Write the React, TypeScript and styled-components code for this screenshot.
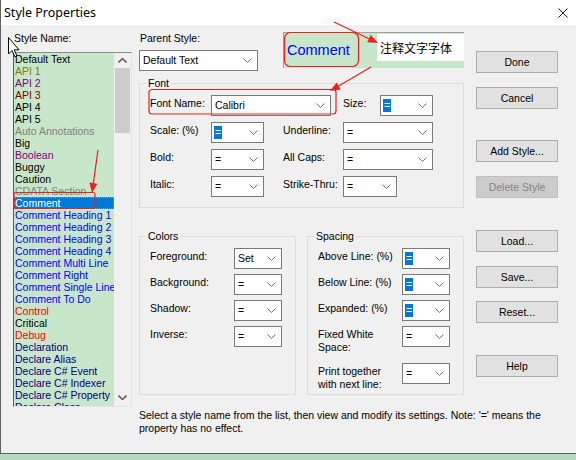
import styled, { createGlobalStyle } from "styled-components";

const GlobalStyle = createGlobalStyle`
  html, body {
    margin: 0;
    padding: 0;
  }
  body {
    width: 576px;
    height: 460px;
    overflow: hidden;
    background: #b7d8bd;
    font-family: "Liberation Sans", Arial, sans-serif;
    font-size: 10.5px;
    color: #000;
  }
  * {
    box-sizing: border-box;
  }
`;

const Window = styled.div`
  position: relative;
  width: 576px;
  height: 454px;
  background: #f0f0f0;
  border-left: 1px solid #5f5f5f;
  border-bottom: 1px solid #5f5f5f;
  display: flex;
  flex-direction: column;
`;

const TitleBar = styled.div`
  height: 25px;
  flex-shrink: 0;
  background: #fff;
  display: flex;
  align-items: center;
  justify-content: space-between;
  padding: 0 8px 0 3px;
`;

const Title = styled.span`
  font-family: "Noto Sans", "Open Sans", sans-serif;
  font-size: 12.5px;
  color: #000;
`;

const Body = styled.div`
  flex: 1;
  display: flex;
  padding-left: 12px;
`;

const LeftCol = styled.div`
  width: 119px;
  flex-shrink: 0;
  display: flex;
  flex-direction: column;
  padding-top: 7px;
`;

const Label = styled.div<{ $mb?: number }>`
  line-height: 13px;
  height: 13px;
  padding-left: 1px;
  margin-bottom: ${(p) => p.$mb ?? 0}px;
  white-space: nowrap;
`;

const ListBox = styled.div`
  height: 355px;
  display: flex;
  border-top: 1px solid #8a8a8a;
  border-left: 1px solid #5a5a5a;
  border-right: 1px solid #e3e3e3;
  border-bottom: 1px solid #e3e3e3;
`;

const ListItems = styled.div`
  flex: 1;
  overflow: hidden;
  background: #c8e6c9;
`;

const Item = styled.div<{ $color: string; $selected?: boolean }>`
  height: 12px;
  line-height: 12px;
  padding-left: 1px;
  white-space: nowrap;
  color: ${(p) => (p.$selected ? "#fff" : p.$color)};
  background: ${(p) => (p.$selected ? "#0078d7" : "transparent")};
  outline: ${(p) => (p.$selected ? "1px dotted #c9902e" : "none")};
  outline-offset: -1px;
`;

const ScrollBar = styled.div`
  width: 17px;
  flex-shrink: 0;
  background: #f0f0f0;
  display: flex;
  flex-direction: column;
`;

const ScrollArrow = styled.div<{ $h: number }>`
  height: ${(p) => p.$h}px;
  display: flex;
  align-items: center;
  justify-content: center;
`;

const ScrollTrack = styled.div`
  flex: 1;
  padding: 0 1px;
`;

const Thumb = styled.div`
  height: 65px;
  background: #cdcdcd;
`;

const MainArea = styled.div`
  margin-left: 7px;
  display: flex;
  flex-direction: column;
`;

const TopSection = styled.div`
  display: flex;
`;

const MidCol = styled.div`
  width: 325px;
  display: flex;
  flex-direction: column;
  padding-top: 7px;
`;

const TopRow = styled.div`
  display: flex;
  height: 40px;
`;

const ParentBlock = styled.div`
  width: 119px;
  display: flex;
  flex-direction: column;
`;

const Preview = styled.div`
  margin-left: 25px;
  width: 181px;
  height: 36px;
  background: #c8e6c9;
  border-top: 1px solid #a0a0a0;
  border-left: 1px solid #a0a0a0;
  display: flex;
  justify-content: space-between;
  align-items: flex-start;
`;

const PreviewText = styled.span`
  font-family: "Liberation Sans", Arial, sans-serif;
  font-size: 14.5px;
  line-height: 17px;
  color: #0000ff;
  padding: 9px 0 0 3px;
`;

const CjkLabel = styled.span`
  margin-top: 1px;
  width: 87px;
  height: 27px;
  line-height: 27px;
  background: #fff;
  padding-left: 3px;
  font-family: "Noto Sans CJK SC", "Noto Sans", sans-serif;
  font-size: 12px;
  color: #000;
`;

const Group = styled.fieldset<{ $w?: number; $mt?: number; $mr?: number }>`
  margin: ${(p) => p.$mt ?? 0}px ${(p) => p.$mr ?? 0}px 0 0;
  width: ${(p) => (p.$w ? `${p.$w}px` : "auto")};
  min-width: 0;
  border: 1px solid #dcdcdc;
  padding: 5px 10px 10px 10px;
  display: flex;
  flex-direction: column;
  gap: ${(p) => (p.$w ? 5 : 6)}px;
`;

const Legend = styled.legend`
  padding: 0 2px;
  margin-left: -4px;
  line-height: 13px;
  font-size: 10.5px;
`;

const GroupsRow = styled.div`
  display: flex;
  margin-top: 22px;
`;

const FieldRow = styled.div<{ $h?: number }>`
  display: flex;
  align-items: flex-start;
  height: ${(p) => p.$h ?? 21}px;
`;

const FieldLabel = styled.div<{ $w: number; $ml?: number }>`
  width: ${(p) => p.$w}px;
  margin-left: ${(p) => p.$ml ?? 0}px;
  flex-shrink: 0;
  padding-top: 2px;
  line-height: 13px;
  white-space: nowrap;
`;

const ComboBox = styled.div<{ $w: number; $h?: number }>`
  width: ${(p) => p.$w}px;
  height: ${(p) => p.$h ?? 21}px;
  flex-shrink: 0;
  background: #fff;
  border: 1px solid #7a7a7a;
  display: flex;
  align-items: center;
  padding: 0 5px 0 2px;
`;

const ComboText = styled.span<{ $hl?: boolean }>`
  line-height: 13px;
  padding: 0 1px;
  background: ${(p) => (p.$hl ? "#0078d7" : "transparent")};
  color: ${(p) => (p.$hl ? "#fff" : "#000")};
  white-space: nowrap;
`;

const ChevronWrap = styled.span`
  margin-left: auto;
  display: flex;
`;

const ButtonCol = styled.div`
  width: 82px;
  margin-left: 12px;
  padding-top: 26px;
  display: flex;
  flex-direction: column;
`;

const Button = styled.div<{ $mt?: number; $disabled?: boolean }>`
  height: 22px;
  margin-top: ${(p) => p.$mt ?? 0}px;
  background: ${(p) => (p.$disabled ? "#cccccc" : "#e1e1e1")};
  border: 1px solid ${(p) => (p.$disabled ? "#bfbfbf" : "#adadad")};
  color: ${(p) => (p.$disabled ? "#838383" : "#000")};
  display: flex;
  align-items: center;
  justify-content: center;
`;

const Note = styled.div`
  width: 415px;
  margin-top: 14px;
  line-height: 13px;
`;

const Overlay = styled.svg`
  position: absolute;
  left: 0;
  top: 0;
  pointer-events: none;
  overflow: visible;
`;

const Chevron = ({ up, dark }: { up?: boolean; dark?: boolean }) => (
  <svg width="9" height="5" viewBox="0 0 9 5">
    <polyline
      points={up ? "0.5,4.5 4.5,0.5 8.5,4.5" : "0.5,0.5 4.5,4.5 8.5,0.5"}
      fill="none"
      stroke={dark ? "#606060" : "#707070"}
      strokeWidth={dark ? 1.6 : 1}
    />
  </svg>
);

const Combo = ({ w, text, hl }: { w: number; text: string; hl?: boolean }) => (
  <ComboBox $w={w}>
    <ComboText $hl={hl}>{text}</ComboText>
    <ChevronWrap>
      <Chevron />
    </ChevronWrap>
  </ComboBox>
);

const Arrow = ({ x1, y1, x2, y2 }: { x1: number; y1: number; x2: number; y2: number }) => {
  const dx = x2 - x1;
  const dy = y2 - y1;
  const len = Math.sqrt(dx * dx + dy * dy);
  const ux = dx / len;
  const uy = dy / len;
  const bx = x2 - ux * 10;
  const by = y2 - uy * 10;
  const pts = `${x2},${y2} ${bx - uy * 4},${by + ux * 4} ${bx + uy * 4},${by - ux * 4}`;
  return (
    <g>
      <line x1={x1} y1={y1} x2={bx} y2={by} stroke="#f01e1e" strokeWidth="1.2" />
      <polygon points={pts} fill="#f01e1e" />
    </g>
  );
};

const styles: { name: string; color: string }[] = [
  { name: "Default Text", color: "#000" },
  { name: "API 1", color: "#808000" },
  { name: "API 2", color: "#800080" },
  { name: "API 3", color: "#800000" },
  { name: "API 4", color: "#000" },
  { name: "API 5", color: "#000" },
  { name: "Auto Annotations", color: "#808080" },
  { name: "Big", color: "#000" },
  { name: "Boolean", color: "#800080" },
  { name: "Buggy", color: "#000" },
  { name: "Caution", color: "#000" },
  { name: "CDATA Section", color: "#808080" },
  { name: "Comment", color: "#0000ff" },
  { name: "Comment Heading 1", color: "#0000ff" },
  { name: "Comment Heading 2", color: "#0000ff" },
  { name: "Comment Heading 3", color: "#0000ff" },
  { name: "Comment Heading 4", color: "#0000ff" },
  { name: "Comment Multi Line", color: "#0000ff" },
  { name: "Comment Right", color: "#0000ff" },
  { name: "Comment Single Line", color: "#0000ff" },
  { name: "Comment To Do", color: "#0000ff" },
  { name: "Control", color: "#ff0000" },
  { name: "Critical", color: "#000" },
  { name: "Debug", color: "#ff0000" },
  { name: "Declaration", color: "#000080" },
  { name: "Declare Alias", color: "#000080" },
  { name: "Declare C# Event", color: "#000080" },
  { name: "Declare C# Indexer", color: "#000080" },
  { name: "Declare C# Property", color: "#000080" },
  { name: "Declare Class", color: "#000080" },
];

const App = () => {
  return (
    <>
      <GlobalStyle />
      <Window>
        <TitleBar>
          <Title>Style Properties</Title>
          <svg width="10" height="10" viewBox="0 0 10 10">
            <path d="M0.5 0.5 L9.5 9.5 M9.5 0.5 L0.5 9.5" stroke="#111" strokeWidth="1" />
          </svg>
        </TitleBar>
        <Body>
          <LeftCol>
            <Label $mb={7}>Style Name:</Label>
            <ListBox>
              <ListItems>
                {styles.map((s) => (
                  <Item key={s.name} $color={s.color} $selected={s.name === "Comment"}>
                    {s.name}
                  </Item>
                ))}
              </ListItems>
              <ScrollBar>
                <ScrollArrow $h={15}>
                  <Chevron up dark />
                </ScrollArrow>
                <ScrollTrack>
                  <Thumb />
                </ScrollTrack>
                <ScrollArrow $h={17}>
                  <Chevron dark />
                </ScrollArrow>
              </ScrollBar>
            </ListBox>
          </LeftCol>
          <MainArea>
            <TopSection>
              <MidCol>
                <TopRow>
                  <ParentBlock>
                    <Label $mb={5}>Parent Style:</Label>
                    <Combo w={119} text="Default Text" />
                  </ParentBlock>
                  <Preview>
                    <PreviewText>Comment</PreviewText>
                    <CjkLabel>注释文字字体</CjkLabel>
                  </Preview>
                </TopRow>
                <Group $mt={5}>
                  <Legend>Font</Legend>
                  <FieldRow>
                    <FieldLabel $w={61}>Font Name:</FieldLabel>
                    <Combo w={120} text="Calibri" />
                    <FieldLabel $w={37} $ml={12}>Size:</FieldLabel>
                    <Combo w={53} text="=" hl />
                  </FieldRow>
                  <FieldRow>
                    <FieldLabel $w={61}>Scale: (%)</FieldLabel>
                    <Combo w={53} text="=" hl />
                    <FieldLabel $w={60} $ml={19}>Underline:</FieldLabel>
                    <Combo w={90} text="=" />
                  </FieldRow>
                  <FieldRow>
                    <FieldLabel $w={61}>Bold:</FieldLabel>
                    <Combo w={53} text="=" />
                    <FieldLabel $w={60} $ml={19}>All Caps:</FieldLabel>
                    <Combo w={90} text="=" />
                  </FieldRow>
                  <FieldRow>
                    <FieldLabel $w={61}>Italic:</FieldLabel>
                    <Combo w={53} text="=" />
                    <FieldLabel $w={60} $ml={19}>Strike-Thru:</FieldLabel>
                    <Combo w={54} text="=" />
                  </FieldRow>
                </Group>
                <GroupsRow>
                  <Group $w={157} $mr={11}>
                    <Legend>Colors</Legend>
                    <FieldRow>
                      <FieldLabel $w={84}>Foreground:</FieldLabel>
                      <Combo w={48} text="Set" />
                    </FieldRow>
                    <FieldRow>
                      <FieldLabel $w={84}>Background:</FieldLabel>
                      <Combo w={48} text="=" />
                    </FieldRow>
                    <FieldRow>
                      <FieldLabel $w={84}>Shadow:</FieldLabel>
                      <Combo w={48} text="=" />
                    </FieldRow>
                    <FieldRow>
                      <FieldLabel $w={84}>Inverse:</FieldLabel>
                      <Combo w={48} text="=" />
                    </FieldRow>
                  </Group>
                  <Group $w={157}>
                    <Legend>Spacing</Legend>
                    <FieldRow>
                      <FieldLabel $w={84}>Above Line: (%)</FieldLabel>
                      <Combo w={48} text="=" hl />
                    </FieldRow>
                    <FieldRow>
                      <FieldLabel $w={84}>Below Line: (%)</FieldLabel>
                      <Combo w={48} text="=" hl />
                    </FieldRow>
                    <FieldRow>
                      <FieldLabel $w={84}>Expanded: (%)</FieldLabel>
                      <Combo w={48} text="=" hl />
                    </FieldRow>
                    <FieldRow $h={32}>
                      <FieldLabel $w={84}>
                        Fixed White
                        <br />
                        Space:
                      </FieldLabel>
                      <Combo w={48} text="=" />
                    </FieldRow>
                    <FieldRow>
                      <FieldLabel $w={84}>
                        Print together
                        <br />
                        with next line:
                      </FieldLabel>
                      <Combo w={48} text="=" />
                    </FieldRow>
                  </Group>
                </GroupsRow>
              </MidCol>
              <ButtonCol>
                <Button>Done</Button>
                <Button $mt={14}>Cancel</Button>
                <Button $mt={31}>Add Style...</Button>
                <Button $mt={14} $disabled>
                  Delete Style
                </Button>
                <Button $mt={32}>Load...</Button>
                <Button $mt={14}>Save...</Button>
                <Button $mt={13}>Reset...</Button>
                <Button $mt={32}>Help</Button>
              </ButtonCol>
            </TopSection>
            <Note>
              Select a style name from the list, then view and modify its settings. Note: '=' means the property has
              no effect.
            </Note>
          </MainArea>
        </Body>
        <Overlay width="576" height="460" viewBox="0 0 576 460">
          <rect x="13" y="192.5" width="81" height="16" rx="2" fill="none" stroke="#f01e1e" strokeWidth="1.2" />
          <Arrow x1={97} y1={150} x2={91} y2={193} />
          <rect x="283.5" y="32.5" width="74" height="34" rx="6" fill="none" stroke="#f01e1e" strokeWidth="1.2" />
          <Arrow x1={333} y1={22} x2={377} y2={43} />
          <rect x="148" y="89.5" width="187" height="24.5" rx="3" fill="none" stroke="#f01e1e" strokeWidth="1.2" />
          <Arrow x1={370} y1={67} x2={329} y2={91} />
          <polygon
            points="7.5,37.5 7.5,54 11,50.5 14,57 16,56 13.2,49.8 18,49.8"
            fill="#fff"
            stroke="#000"
            strokeWidth="1"
            strokeLinejoin="round"
          />
        </Overlay>
      </Window>
    </>
  );
};

export default App;
